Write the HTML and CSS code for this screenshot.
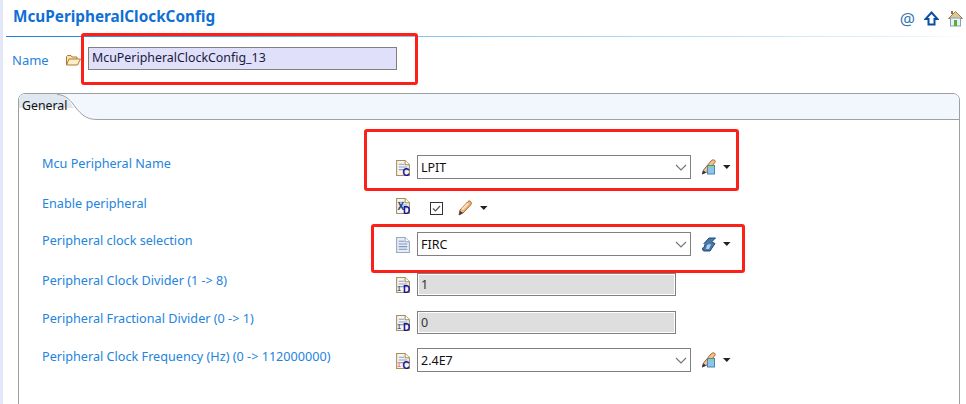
FILE: index.html
```html
<!DOCTYPE html>
<html lang="en">
<head>
<meta charset="utf-8">
<title>McuPeripheralClockConfig</title>
<link rel="stylesheet" href="styles.css">
</head>
<body>
<svg class="defs" width="0" height="0" aria-hidden="true">
  <defs>
    <symbol id="doc" viewBox="0 0 13 15">
      <path d="M.5.5h8l4 4v10H.5z" fill="#f6f5ee" stroke="#a8905c"/>
      <path d="M8.500.5v4h4" fill="#fff" stroke="#a8905c"/>
      <path d="M2.500 4h5M2.500 6.500h8M2.500 9h8" stroke="#8aa0c8"/>
    </symbol>
    <symbol id="doc-plain" viewBox="0 0 13 15">
      <path d="M.5.5h8l4 4v10H.5z" fill="#e8ecf4" stroke="#98a8c4"/>
      <path d="M8.500.5v4h4" fill="#fff" stroke="#98a8c4"/>
      <path d="M2.500 4h5M2.500 6.500h8M2.500 9h8M2.500 11.500h8" stroke="#7c94c0"/>
    </symbol>
    <symbol id="pencil" viewBox="0 0 14 16">
      <path d="M1 15l1-5L10 1.500c1-1 2.500-.5 3 .5s.5 2-.5 3L5 13z" fill="#f2b678" stroke="#a8622a"/>
      <path d="M1 15l1-4 3 2z" fill="#1c3c78"/>
      <path d="M4 9.500l6-6" stroke="#fbe2c4" stroke-width="2"/>
    </symbol>
    <symbol id="calc" viewBox="0 0 14 16">
      <path d="M0 15l1.500-4L9 2c1-1.200 2.500-1.500 3.500-.8s.8 2-.2 3L5 13z" fill="#f4c090" stroke="#a8622a"/>
      <path d="M0 15.500l1.500-4 2.500 2z" fill="#1c2c70"/>
      <rect x="5.500" y="6.500" width="7" height="8.500" fill="#8cc4ec" stroke="#4a86b8"/>
      <path d="M6 7h6v2H6z" fill="#90d090"/>
    </symbol>
    <symbol id="caret" viewBox="0 0 8 4">
      <path d="M0 0h7.500L3.800 4z" fill="#222"/>
    </symbol>
  </defs>
</svg>

<div class="app">
  <header class="top">
    <h1 class="title">McuPeripheralClockConfig</h1>
    <div class="tools">
      <span class="at">@</span>
      <svg class="tool" width="15" height="15" viewBox="0 0 15 15"><path d="M7.500 1.500L13.500 8H10.500v5.500h-6V8H1.500z" fill="#fff" stroke="#0a4ea0" stroke-width="2"/></svg>
      <svg class="tool" width="15" height="17" viewBox="0 0 15 17">
        <path d="M3 1h2v3H3z" fill="#a06a40"/>
        <path d="M7.500 1.500L14.500 8.500H.5z" fill="#e0c898" stroke="#a07a50"/>
        <rect x="2.500" y="8" width="10" height="8" fill="#e8f0f8" stroke="#8aa0b8"/>
        <rect x="6" y="10" width="3" height="6" fill="#58b030"/>
      </svg>
    </div>
  </header>

  <div class="name-row">
    <span class="name-label">Name</span>
    <svg class="folder" width="15" height="12" viewBox="0 0 15 12">
      <path d="M.5 11V2.500l1-1h3.500l1 1.500h5v2" fill="#f8e4b0" stroke="#b07a30"/>
      <path d="M.5 11l2.500-6h11.500l-3 6z" fill="#fbeec8" stroke="#b07a30"/>
    </svg>
    <div class="name-input">McuPeripheralClockConfig_13</div>
  </div>

  <section class="panel">
    <div class="strip">
      <svg class="tab-shape" width="80" height="26" viewBox="0 0 80 26">
        <path d="M0 26V7Q0 0 7 0H38C47 0 52 7 57 14C62 20 67 25 78 25H80V26z" fill="#fff"/>
        <path d="M0 14V7Q0 0 7 0H38C46 0 50 7 55 14z" fill="#dfe7f0"/>
        <path d="M38 .5C47 .5 52 7 57 14C62 20 67 25.500 78 25.500H80" fill="none" stroke="#a0a0a0"/>
      </svg>
      <span class="tab-label">General</span>
    </div>
    <div class="form">
      <span class="label">Mcu Peripheral Name</span>
      <svg class="ic" width="14" height="16"><use href="#doc"/><text x="6.500" y="15.500" class="ic-letter ic-c">C</text></svg>
      <div class="field-group">
        <div class="combo">LPIT<svg class="chev" width="12" height="7" viewBox="0 0 12 7"><path d="M1 1l5 5 5-5" fill="none" stroke="#777" stroke-width="1.200"/></svg></div>
        <svg class="act" width="14" height="16"><use href="#calc"/></svg>
        <svg class="caret" width="8" height="4"><use href="#caret"/></svg>
      </div>

      <span class="label label-up">Enable peripheral</span>
      <svg class="ic ic-up" width="14" height="16"><use href="#doc"/><text x="1.500" y="12" class="ic-letter ic-x">X</text><text x="7" y="15.500" class="ic-letter ic-c">D</text></svg>
      <div class="field-group check-group">
        <svg class="check" width="13" height="13" viewBox="0 0 13 13"><rect x=".5" y=".5" width="12" height="12" fill="#fff" stroke="#333"/><path d="M3 6.500l2.500 2.500 4.500-5" fill="none" stroke="#555" stroke-width="1.200"/></svg>
        <svg class="pen" width="14" height="16"><use href="#pencil"/></svg>
        <svg class="caret caret-small" width="8" height="4"><use href="#caret"/></svg>
      </div>

      <span class="label">Peripheral clock selection</span>
      <svg class="ic" width="14" height="16"><use href="#doc-plain"/></svg>
      <div class="field-group">
        <div class="combo">FIRC<svg class="chev" width="12" height="7" viewBox="0 0 12 7"><path d="M1 1l5 5 5-5" fill="none" stroke="#777" stroke-width="1.200"/></svg></div>
        <svg class="act" width="14" height="15" viewBox="0 0 14 15"><path d="M7 1h6.500L9.500 5 13 6.500 8 14H1.500L0 11.500l2-1 1-3-1-1z" fill="#4a78a8" stroke="#1c4a80"/><path d="M5 8c1.500-1 3-1 4-.5L7 12H4z" fill="#b8d0e8"/></svg>
        <svg class="caret" width="8" height="4"><use href="#caret"/></svg>
      </div>

      <span class="label">Peripheral Clock Divider (1 -&gt; 8)</span>
      <svg class="ic" width="14" height="16"><use href="#doc"/><text x="1" y="14" class="ic-letter ic-n">1</text><text x="7" y="15.500" class="ic-letter ic-c">D</text></svg>
      <div class="field-group"><div class="readonly">1</div></div>

      <span class="label">Peripheral Fractional Divider (0 -&gt; 1)</span>
      <svg class="ic" width="14" height="16"><use href="#doc"/><text x="1" y="14" class="ic-letter ic-n">1</text><text x="7" y="15.500" class="ic-letter ic-c">D</text></svg>
      <div class="field-group"><div class="readonly">0</div></div>

      <span class="label">Peripheral Clock Frequency (Hz) (0 -&gt; 112000000)</span>
      <svg class="ic" width="14" height="16"><use href="#doc"/><text x="1" y="14" class="ic-letter ic-p">1</text><text x="6.500" y="15.500" class="ic-letter ic-c">C</text></svg>
      <div class="field-group">
        <div class="combo">2.4E7<svg class="chev" width="12" height="7" viewBox="0 0 12 7"><path d="M1 1l5 5 5-5" fill="none" stroke="#777" stroke-width="1.200"/></svg></div>
        <svg class="act" width="14" height="16"><use href="#calc"/></svg>
        <svg class="caret" width="8" height="4"><use href="#caret"/></svg>
      </div>
    </div>
  </section>

  <div class="mark mark-name"></div>
  <div class="mark mark-lpit"></div>
  <div class="mark mark-firc"></div>
</div>
</body>
</html>
```
FILE: styles.css
```css
html, body {
  margin: 0;
  height: 404px;
  overflow: hidden;
}
body { background: #e2e8f8; }
.defs { position: absolute; }
.app {
  position: relative;
  height: 404px;
  overflow: hidden;
  margin-left: 3px;
  background: #fff;
  font-family: "Noto Sans", "Noto Sans CJK SC", sans-serif;
  font-size: 12px;
}

.top {
  display: flex;
  align-items: center;
  justify-content: space-between;
  height: 37px;
  margin-left: 3px;
  padding: 0 3px 4px 7px;
  box-sizing: border-box;
  border-bottom: 1px solid;
  border-image: linear-gradient(90deg, #1a80d8 0%, #8cc4f0 45%, #e8f4fc 95%, #fff 100%) 1;
}
.title {
  margin: 0;
  font-size: 15.300px;
  font-weight: 700;
  color: #0f6fd4;
}
.tools { display: flex; align-items: center; gap: 9px; margin-top: 4px; }
.at { color: #3a78b0; font-size: 17px; line-height: 17px; }

.name-row {
  display: flex;
  align-items: flex-start;
  height: 56px;
  padding-left: 9px;
  padding-top: 10px;
  box-sizing: border-box;
}
.name-label { color: #2484dc; width: 54px; font-size: 13px; line-height: 26px; }
.folder { margin-top: 7px; margin-right: 7px; }
.name-input {
  width: 309px;
  height: 23px;
  box-sizing: border-box;
  border: 1px solid #808080;
  background: #e0e0fa;
  color: #1a1a40;
  font-size: 12.400px;
  line-height: 20px;
  padding-left: 3px;
}

.panel {
  width: 942px;
  height: 340px;
  margin-left: 15px;
  box-sizing: border-box;
  border: 1px solid #a0a0a0;
  border-radius: 7px 7px 0 0;
}
.strip {
  position: relative;
  height: 25px;
  background: #f2f6fd;
  border-bottom: 1px solid #a0a0a0;
  border-radius: 6px 6px 0 0;
}
.tab-shape { position: absolute; left: 0; top: 0; }
.tab-label {
  position: relative;
  display: block;
  padding-left: 3px;
  line-height: 24px;
  color: #111;
  font-size: 12.300px;
}
.form {
  display: grid;
  grid-template-columns: 354px 21px 1fr;
  grid-template-rows: 41px 36px 40px 38px 38px 24px;
  padding: 35px 0 0 23px;
  align-items: start;
}
.label { color: #2484dc; line-height: 17px; font-size: 12.650px; }
.label-up { margin-top: -1px; }
.ic { margin-top: 5px; }
.ic-up { margin-top: 2px; }
.ic-letter { font-family: "Liberation Sans", sans-serif; font-weight: 700; font-size: 10px; }
.ic-c { fill: #10109c; }
.ic-x { fill: #224488; font-size: 10px; }
.ic-n { fill: #3a5a9a; font-size: 7px; }
.ic-p { fill: #e87878; font-size: 7px; }
.field-group { display: flex; align-items: center; height: 24px; }
.combo, .readonly {
  display: flex;
  align-items: center;
  box-sizing: border-box;
  border: 1px solid #808080;
  padding-left: 3px;
  color: #111;
  font-size: 12.500px;
}
.combo {
  width: 274px;
  height: 24px;
  justify-content: space-between;
  padding-right: 3px;
  background: #fff;
}
.readonly {
  width: 259px;
  height: 23px;
  background: #dedede;
  box-shadow: inset 0 0 0 1px #fff;
  color: #333;
}
.act { margin-left: 11px; }
.caret { margin-left: 7px; }
.caret-small { margin-left: 8px; }
.check { margin-left: 13px; }
.pen { margin-left: 15px; }

.mark {
  position: absolute;
  box-sizing: border-box;
  border: 3px solid #fd2018;
  border-radius: 3px;
}
.mark-name { left: 78px; top: 33px; width: 337px; height: 52px; }
.mark-lpit { left: 361px; top: 129px; width: 375px; height: 62px; }
.mark-firc { left: 368px; top: 224px; width: 374px; height: 49px; }
```
